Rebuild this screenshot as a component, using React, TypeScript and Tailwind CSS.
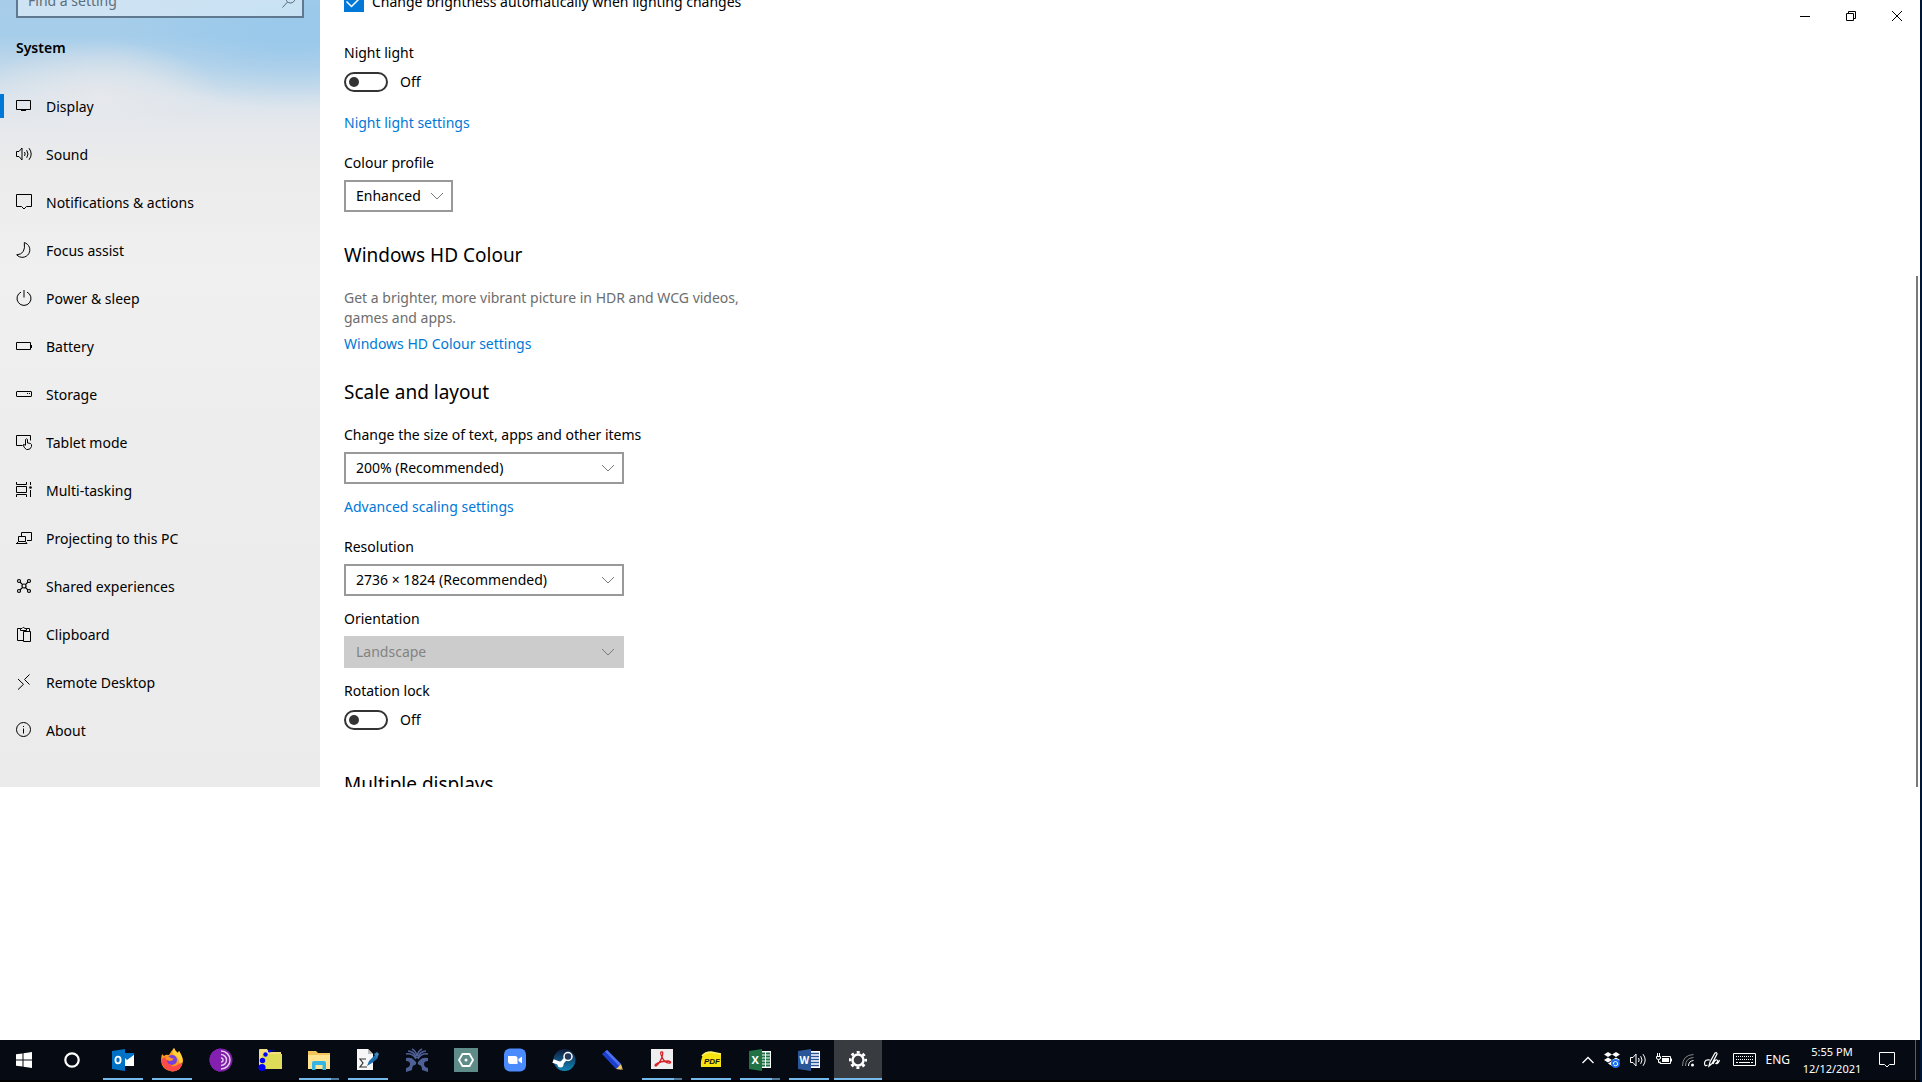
import type { ReactNode } from "react";

const chevron = (
  <svg className="pointer-events-none absolute right-[10px] top-[12px]" width="12" height="8" viewBox="0 0 12 8" fill="none" stroke="#7a7a7a">
    <path d="M0 1 L6 7 L12 1" />
  </svg>
);

const stroke = { fill: "none", stroke: "#000", strokeWidth: 1 };

const navItems: { label: string; icon: ReactNode }[] = [
  {
    label: "Display",
    icon: (
      <g {...stroke}>
        <path d="M0.5 2.5h14v9h-14z M7.5 12v1 M5 12.5h5" />
      </g>
    ),
  },
  {
    label: "Sound",
    icon: (
      <g {...stroke}>
        <path d="M0.5 5.5h2.5l3-3.5v12l-3-3.5h-2.5z" />
        <path d="M8.500 6q1.300 2 0 4 M10.700 4.200q2.600 3.800 0 7.600 M13 2.200q4.400 5.800 0 11.600" />
      </g>
    ),
  },
  {
    label: "Notifications & actions",
    icon: (
      <g {...stroke}>
        <path d="M0.5 0.5h15v12h-5l-2.5 2.5l-2.5-2.5h-5z" />
      </g>
    ),
  },
  {
    label: "Focus assist",
    icon: (
      <g {...stroke}>
        <path d="M8.3 0.6a7.5 7.5 0 1 1-7.6 12.2q9.3-0.5 7.6-12.2z" />
      </g>
    ),
  },
  {
    label: "Power & sleep",
    icon: (
      <g {...stroke}>
        <path d="M5 2.1a7 7 0 1 0 6 0" />
        <path d="M8 0v7.5" stroke="#555" strokeWidth="1.5" />
      </g>
    ),
  },
  {
    label: "Battery",
    icon: (
      <g {...stroke}>
        <path d="M0.5 4.5h14v7h-14z" />
        <path d="M15.5 7v3" />
      </g>
    ),
  },
  {
    label: "Storage",
    icon: (
      <g {...stroke}>
        <rect x="0.5" y="5.5" width="15" height="5" rx="0.5" />
        <path d="M11 7.5h1 M13 7.5h1" />
      </g>
    ),
  },
  {
    label: "Tablet mode",
    icon: (
      <g {...stroke}>
        <path d="M6.5 11.5h-6v-10h14v5" />
        <path d="M9.500 11v-5.500q1-1.500 2 0v3.500q3.500 0 4 1.500v2q-1 3-3.500 3h-1.500q-2-1-3.500-4.500q0.500-1.500 2.500 0.500" />
      </g>
    ),
  },
  {
    label: "Multi-tasking",
    icon: (
      <g {...stroke}>
        <path d="M0.5 4.5h10v6h-10z M0.5 0v2.5h10v-2.5 M0.5 15v-2.5h10v2.5 M14.5 0v3 M14.5 8v7" />
        <circle cx="14.5" cy="5.5" r="1.3" fill="#000" stroke="none" />
      </g>
    ),
  },
  {
    label: "Projecting to this PC",
    icon: (
      <g {...stroke}>
        <path d="M5.5 6v-3.5h10v8h-4.5 M2.5 6.500h7v5h-7z M0 13.500h11 M0.500 13.500l2-2 M11 13.500l-1.500-2" />
      </g>
    ),
  },
  {
    label: "Shared experiences",
    icon: (
      <g {...stroke} strokeWidth="1.2">
        <circle cx="3" cy="3" r="1.5" />
        <circle cx="13" cy="3" r="1.5" />
        <circle cx="3" cy="13" r="1.5" />
        <circle cx="13" cy="13" r="1.5" />
        <circle cx="8" cy="8" r="2" />
        <path d="M4 4l2.6 2.6 M12 4l-2.6 2.6 M4 12l2.6-2.6 M12 12l-2.6-2.6" />
      </g>
    ),
  },
  {
    label: "Clipboard",
    icon: (
      <g {...stroke}>
        <path d="M7 14.5h-5.5v-12h3 M10.5 2.5h3v3" />
        <path d="M4.5 4.5v-2h1.500q1-2.500 3 0h1.500v2z" />
        <path d="M7.5 5.500h7v10h-7z" />
      </g>
    ),
  },
  {
    label: "Remote Desktop",
    icon: (
      <g {...stroke}>
        <path d="M2 5l5.500 5.300l-5.500 5.300 M13.500 0.500l-5 5l5 5" />
      </g>
    ),
  },
  {
    label: "About",
    icon: (
      <g {...stroke}>
        <circle cx="7.5" cy="7.5" r="7" />
        <path d="M7.5 6.5v5 M7.5 4v1" />
      </g>
    ),
  },
];

type TaskApp = { name: string; icon: ReactNode; running?: boolean; stacked?: boolean };

const apps: TaskApp[] = [
  {
    name: "Outlook",
    running: true,
    icon: (
      <>
        <path d="M12 7h11v11h-11z" fill="#fff" />
        <path d="M12 5h11v2l-7 6l-4-3z" fill="#0072c6" />
        <path d="M13 9l3 3l7-5v2l-7 5l-3-2z" fill="#fff" />
        <path d="M1 3l13-2v22l-13-2z" fill="#0072c6" />
        <ellipse cx="7" cy="12" rx="2.6" ry="3.3" fill="none" stroke="#fff" strokeWidth="1.8" />
      </>
    ),
  },
  {
    name: "Firefox",
    running: true,
    icon: (
      <>
        <path d="M2 6l2 2q2-2 5-1q3-5 5-7q1 3 4 5l1-2q4 6 4 10q-1 10-11 10.500q-10-1-11-10.500q0-4 1-7z" fill="#ff9a1f" />
        <path d="M1 12q2-3 5-3q-1 2 2 4q2 6 7 5q4-1 6-6q2 2 1 5q-3 6-10 6.500q-9-1-11-11.500z" fill="#ff4a4a" />
        <path d="M14 0q1 3 4 5l1-2q4 6 3.500 11l-3 2q0-7-7-10q0-4 1.500-6z" fill="#ffd23a" />
        <circle cx="12" cy="12" r="5" fill="#7540dc" />
        <path d="M5 9q3-2 6 1q2 1 3 0q-1 3-4 3q-3 0-5-4z" fill="#ff9426" />
      </>
    ),
  },
  {
    name: "Tor Browser",
    icon: (
      <>
        <circle cx="12" cy="12" r="11.500" fill="#7a1fa2" />
        <path d="M12 0.500a11.500 11.500 0 0 0 0 23z" fill="#8420b0" />
        <g fill="none" stroke="#e6c8f0" strokeWidth="1.5">
          <path d="M12 3a9 9 0 0 1 0 18" />
          <path d="M12 6.500a5.500 5.500 0 0 1 0 11" />
          <path d="M12 10a2 2 0 0 1 0 4" />
        </g>
      </>
    ),
  },
  {
    name: "Folder backup",
    icon: (
      <>
        <path d="M1 5v-3q0-1 1-1h7l2 3h12v17h-22z" fill="#f4df80" />
        <path d="M4 6h20v15h-20z" fill="#dfdc5a" />
        <g fill="#0000f5">
          <circle cx="4" cy="19.5" r="3.6" />
          <circle cx="4.5" cy="12.500" r="2.700" />
          <circle cx="7.500" cy="6.500" r="2.200" />
          <circle cx="11.500" cy="3" r="1.500" />
          <circle cx="15.500" cy="2.500" r="1" />
        </g>
      </>
    ),
  },
  {
    name: "File Explorer",
    running: true,
    stacked: true,
    icon: (
      <>
        <path d="M1 3h8l2 2h12v16h-22z" fill="#f2c55a" />
        <path d="M1 7h22v14h-22z" fill="#ffe391" />
        <path d="M5 22v-7q0-2 2-2h10q2 0 2 2v7h-3.500v-5h-7v5z" fill="#35b5e5" />
      </>
    ),
  },
  {
    name: "TeXstudio",
    running: true,
    icon: (
      <>
        <path d="M1 1h11l5 5v16h-16z" fill="#f7f7f7" />
        <path d="M12 1v5h5z" fill="#bbb" />
        <path d="M10 11h-6l3 4l-3 4h7" fill="none" stroke="#333" strokeWidth="1.200" />
        <path d="M11 18l2-5l6-6l3 3l-6 5z" fill="#1a6eb0" />
        <path d="M18 6l3-2l2 2l-2 4z" fill="#3f87bd" />
      </>
    ),
  },
  {
    name: "Bible study",
    icon: (
      <>
        <path d="M1 10q6-1 8 2q4 3 1 5q-3 0-3 5l-6 2v-4q4-1 4-4q0-3-4-3z M23 10q-6-1-8 2q-4 3-1 5q3 0 3 5l6 2v-4q-4-1-4-4q0-3 4-3z" fill="#4f6097" />
        <path d="M1 6q7-1 10 5 M3 3q6 0 8.500 7 M7 1q4 2 5 7 M23 6q-7-1-10 5 M21 3q-6 0-8.500 7 M17 1q-4 2-5 7" fill="none" stroke="#4f6097" strokeWidth="1.500" />
      </>
    ),
  },
  {
    name: "Settings tool",
    icon: (
      <>
        <path d="M0 0h24v24h-24z" fill="#5d8c89" />
        <path d="M8.500 6h7l3.500 6l-3.500 6h-7l-3.500-6z" fill="none" stroke="#fff" strokeWidth="1.800" />
        <circle cx="12" cy="12" r="1.500" fill="#fff" />
      </>
    ),
  },
  {
    name: "Zoom",
    icon: (
      <>
        <rect x="1" y="0.500" width="22" height="23" rx="6" fill="#4a8cff" />
        <path d="M5 8h7q2.500 0 2.500 2.500v5.500h-7q-2.500 0-2.500-2.500z M15.500 11l3.500-2.500v7l-3.500-2.500z" fill="#fff" />
      </>
    ),
  },
  {
    name: "Steam",
    icon: (
      <>
        <defs>
          <linearGradient id="steam" x1="0" y1="0" x2="0" y2="1">
            <stop offset="0" stopColor="#101a3d" />
            <stop offset="1" stopColor="#1387b8" />
          </linearGradient>
        </defs>
        <circle cx="12.500" cy="12" r="11" fill="url(#steam)" />
        <path d="M1 13l8 3l6-7" fill="none" stroke="#fff" strokeWidth="3.500" />
        <circle cx="16" cy="8.500" r="4" fill="#24385d" stroke="#fff" strokeWidth="1.500" />
        <circle cx="8.500" cy="16.500" r="3" fill="#fff" />
      </>
    ),
  },
  {
    name: "Journal",
    icon: (
      <>
        <path d="M1 6l5-4l14 14l-5 5z" fill="#1d3fd0" />
        <path d="M4 3.500l2-1.500l14 14l-2 2z" fill="#4e72ee" />
        <path d="M15 21l5-5l2 6z" fill="#e8c66f" />
        <path d="M19.500 21.500l2-1.500l0.500 2z" fill="#553" />
      </>
    ),
  },
  {
    name: "Acrobat Reader",
    running: true,
    stacked: true,
    icon: (
      <>
        <path d="M1 1h22v20h-22z" fill="#eee" />
        <path d="M11 4q3-1 1 5q-2 6-6 9q-2 0 0-2q5-3 12-3q4 1 2 2q-5 1-8-6q-2-4-1-5z" fill="none" stroke="#d61f26" strokeWidth="1.300" />
      </>
    ),
  },
  {
    name: "PDF editor",
    running: true,
    icon: (
      <>
        <path d="M2 19q-1-14 8-15l12 2v13z" fill="#f8e312" />
        <path d="M3 8q3-4 9-4l10 2" fill="none" stroke="#fff36b" strokeWidth="1.500" />
        <text x="5" y="16" fontFamily="Liberation Sans, sans-serif" fontSize="8" fontWeight="bold" fontStyle="italic" fill="#111">PDF</text>
      </>
    ),
  },
  {
    name: "Excel",
    running: true,
    stacked: true,
    icon: (
      <>
        <path d="M13 3h10v17h-10z" fill="#fff" />
        <path d="M14 5.500h3m1 0h4m-8 3h3m1 0h4m-8 3h3m1 0h4m-8 3h3m1 0h4m-8 3h3m1 0h4" stroke="#217346" strokeWidth="1.800" />
        <path d="M1 3l13-2v22l-13-2z" fill="#217346" />
        <text x="3.500" y="16" fontFamily="Open Sans, sans-serif" fontSize="11" fontWeight="bold" fill="#fff">X</text>
      </>
    ),
  },
  {
    name: "Word",
    running: true,
    icon: (
      <>
        <path d="M13 3h10v17h-10z" fill="#fff" />
        <path d="M14 5.500h8m-8 3h8m-8 3h8m-8 3h8m-8 3h8" stroke="#2b579a" strokeWidth="1.300" />
        <path d="M1 3l13-2v22l-13-2z" fill="#2b579a" />
        <text x="2.500" y="16" fontFamily="Open Sans, sans-serif" fontSize="10" fontWeight="bold" fill="#fff">W</text>
      </>
    ),
  },
];

const trayIcons: { name: string; width: number; icon: ReactNode }[] = [
  { name: "Show hidden icons", width: 12, icon: <path d="M0.500 11l5.500-5.500l5.500 5.500" strokeWidth="1.300" /> },
  {
    name: "Dropbox",
    width: 16,
    icon: (
      <>
        <path d="M4 0l4 2.500l-4 2.500l-4-2.500z M12 0l4 2.500l-4 2.500l-4-2.500z M4 5.500l4 2.500l-4 2.500l-4-2.500z M12 5.500l4 2.500l-4 2.500l-4-2.500z M8 9l4 2.500l-4 2.500l-4-2.500z" fill="#fff" stroke="none" />
        <circle cx="11.500" cy="11.500" r="4.500" fill="#1d6ff2" stroke="none" />
        <path d="M9.500 12v-1.500q2-2 4 0 M13.500 11v2q-2 1.500-4 0" />
      </>
    ),
  },
  {
    name: "Volume",
    width: 16,
    icon: (
      <path d="M0.500 5.500h2.500l3-3.500v12l-3-3.500h-2.500z M8.500 6q1.300 2 0 4 M10.700 4.200q2.600 3.800 0 7.600 M13 2.200q4.400 5.800 0 11.600" />
    ),
  },
  {
    name: "Battery charging",
    width: 16,
    icon: (
      <>
        <path d="M6 4.500h8.500v7h-10.500v-2 M15.500 6.500v3 M1.500 1v3 M3.500 1v3 M0.500 4.500h4v1.500q0 1.500-2 1.500t-2-1.500z M2.500 7.500v3h2" />
        <path d="M6 6h7v4h-7z" fill="#fff" stroke="none" />
      </>
    ),
  },
  {
    name: "Wi-Fi",
    width: 12,
    icon: (
      <>
        <path d="M0.500 14q0-11 11-11.500 M3.500 14q0-8 8-8.500" stroke="#888" />
        <path d="M6.500 14q0-5 5-5.500" />
        <circle cx="10.500" cy="13" r="1.500" fill="#fff" stroke="none" />
      </>
    ),
  },
  {
    name: "Pen workspace",
    width: 16,
    icon: (
      <path d="M5 14l1-4l5-9q2-1 2 1l-5 9.500z M6 8q-5-1-5.500 3q0 4 3 2 M9 12q2-5 4-4t-1 3.500q2 1 3.500-3.500" strokeWidth="1.200" />
    ),
  },
];

function Toggle({ id, label }: { id: string; label: string }) {
  return (
    <div>
      <label htmlFor={id} className="block">{label}</label>
      <div className="mt-[9px] flex items-center gap-3">
        <input
          id={id}
          type="checkbox"
          role="switch"
          className="flex h-5 w-11 appearance-none items-center rounded-full border-2 border-[#333] pl-[3px] before:size-[10px] before:rounded-full before:bg-[#333] checked:before:ml-[23px]"
        />
        <span>Off</span>
      </div>
    </div>
  );
}

function Dropdown({ id, label, value, narrow, disabled }: { id: string; label: string; value: string; narrow?: boolean; disabled?: boolean }) {
  return (
    <div>
      <label htmlFor={id} className="block">{label}</label>
      <div className={narrow ? "relative mt-[7px] w-[109px]" : "relative mt-[7px] w-[280px]"}>
        <select
          id={id}
          disabled={disabled}
          className="block h-8 w-full appearance-none border-2 border-[#999] bg-white pl-[10px] disabled:border-[#ccc] disabled:bg-[#ccc] disabled:text-[#838383] disabled:opacity-100"
        >
          <option>{value}</option>
        </select>
        {chevron}
      </div>
    </div>
  );
}

function Sidebar() {
  return (
    <aside className="w-80 shrink-0 bg-[radial-gradient(ellipse_120px_60px_at_100px_100px,#e6e8ec_0%,#e6e8ec00_100%),radial-gradient(ellipse_180px_80px_at_290px_30px,#98c8eb_0%,#98c8eb00_100%),linear-gradient(180deg,#a6cce9_0px,#a6ceea_36px,#b7d4ea_55px,#cbddea_78px,#dbe4ec_98px,#e5e8ec_125px,#ebebeb_165px,#f0f0f0_270px,#ededed_450px,#ebebeb_100%)]">
      <div className="relative mx-4 -mt-[18px]">
        <input
          type="text"
          aria-label="Find a setting"
          placeholder="Find a setting"
          className="block h-9 w-full border-2 border-[#5f7a90] bg-white/45 pl-[10px] placeholder:text-[#5d6d7b]"
        />
        <svg className="absolute right-2 top-[10px]" width="14" height="16" viewBox="0 0 14 16" fill="none" stroke="#52687a">
          <circle cx="8.500" cy="6.500" r="4.500" />
          <path d="M5.500 10l-5 5.500" />
        </svg>
      </div>
      <h2 className="mx-4 mt-5 font-semibold">System</h2>
      <nav className="mt-6">
        {navItems.map((item, i) => (
          <a key={item.label} href="#" className="flex h-12 items-center">
            <span className={i === 0 ? "mr-3 h-6 w-1 bg-[#0078d7]" : "mr-3 h-6 w-1"} />
            <svg width="16" height="16" viewBox="0 0 16 16" className="shrink-0 overflow-visible">{item.icon}</svg>
            <span className="pl-[14px] pt-[2px]">{item.label}</span>
          </a>
        ))}
      </nav>
    </aside>
  );
}

function DisplaySettings() {
  return (
    <main className="-mt-2 w-[440px] pl-6">
      <label className="flex gap-2">
        <span className="grid size-5 shrink-0 place-items-center">
          <input type="checkbox" defaultChecked className="col-start-1 row-start-1 size-5 appearance-none bg-[#0078d7]" />
          <svg className="pointer-events-none col-start-1 row-start-1" width="20" height="20" viewBox="0 0 20 20" fill="none" stroke="#fff" strokeWidth="1.5">
            <path d="M2.500 9.500l5 5l10-10" />
          </svg>
        </span>
        <span className="whitespace-nowrap">Change brightness automatically when lighting changes</span>
      </label>
      <div className="mt-[31px]">
        <Toggle id="night-light" label="Night light" />
      </div>
      <a href="#" className="mt-[21px] block text-[#0078d7]">Night light settings</a>
      <div className="mt-5">
        <Dropdown id="profile" label="Colour profile" value="Enhanced" narrow />
      </div>

      <h2 className="mt-[29px] text-[19px] leading-7">Windows HD Colour</h2>
      <p className="mt-[19px] text-[#6d6d6d]">
        Get a brighter, more vibrant picture in HDR and WCG videos, games and apps.
      </p>
      <a href="#" className="mt-[6px] block text-[#0078d7]">Windows HD Colour settings</a>

      <h2 className="mt-6 text-[19px] leading-7">Scale and layout</h2>
      <div className="mt-[19px]">
        <Dropdown id="scale" label="Change the size of text, apps and other items" value="200% (Recommended)" />
      </div>
      <a href="#" className="mt-[13px] block text-[#0078d7]">Advanced scaling settings</a>
      <div className="mt-5">
        <Dropdown id="resolution" label="Resolution" value="2736 × 1824 (Recommended)" />
      </div>
      <div className="mt-[13px]">
        <Dropdown id="orientation" label="Orientation" value="Landscape" disabled />
      </div>
      <div className="mt-[13px]">
        <Toggle id="rotation-lock" label="Rotation lock" />
      </div>

      <h2 className="mt-10 text-[19px] leading-7">Multiple displays</h2>
    </main>
  );
}

function Taskbar() {
  return (
    <footer className="flex h-[42px] shrink-0 items-stretch border-b-2 border-black bg-[#060a12] text-white">
      <button aria-label="Start" className="flex w-12 items-center justify-center">
        <svg width="16" height="16" viewBox="0 0 16 16" fill="#fff">
          <path d="M0 2.300l6.500-0.900v6.100h-6.500z M7.500 1.200l8.500-1.200v7.500h-8.500z M0 8.500h6.500v6.100l-6.500-0.900z M7.500 8.500h8.500v7.500l-8.500-1.200z" />
        </svg>
      </button>
      <button aria-label="Cortana" className="mr-[3px] flex w-12 items-center justify-center">
        <svg width="16" height="16" viewBox="0 0 16 16">
          <circle cx="8" cy="8" r="6.700" fill="none" stroke="#fff" strokeWidth="2.200" />
        </svg>
      </button>
      <div className="flex gap-px">
        {apps.map((app) => (
          <button key={app.name} aria-label={app.name} className="flex w-12 flex-col items-center pt-2">
            <svg width="24" height="24" viewBox="0 0 24 24">{app.icon}</svg>
            {app.running && (
              <span className="mt-auto flex h-[2px] w-10 bg-[#76b9ed]">
                {app.stacked && <span className="ml-auto w-2 bg-[#51799c]" />}
              </span>
            )}
          </button>
        ))}
        <button aria-label="Settings" className="flex w-12 flex-col items-center bg-[#383b40] pt-[10px]">
          <svg width="20" height="20" viewBox="0 0 20 20" fill="none" stroke="#fff">
            <circle cx="10" cy="10" r="5.500" strokeWidth="2.400" />
            <circle cx="10" cy="10" r="7.700" strokeWidth="2.600" strokeDasharray="3 3.047" strokeDashoffset="1.500" />
          </svg>
          <span className="mt-auto h-[2px] w-full bg-[#76b9ed]" />
        </button>
      </div>

      <div className="ml-auto flex items-center gap-2">
        {trayIcons.map((item) => (
          <button key={item.name} aria-label={item.name} className="px-px">
            <svg width={item.width} height="16" viewBox={`0 0 ${item.width} 16`} fill="none" stroke="#fff" className="block overflow-visible">
              {item.icon}
            </svg>
          </button>
        ))}
        <button aria-label="Touch keyboard" className="ml-1">
          <svg width="24" height="14" viewBox="0 0 24 14" fill="none" stroke="#fff" className="block">
            <path d="M0.500 0.500h22v12h-22z" />
            <path d="M3 3.500h18 M3 6.500h18" strokeDasharray="1 1" />
            <path d="M3 9.500h2 M6 9.500h11 M18 9.500h2" />
          </svg>
        </button>
        <button className="text-xs">ENG</button>
      </div>
      <button className="ml-3 w-[60px] text-center text-[11px] leading-[17px]">
        <span className="block">5:55 PM</span>
        <span className="block">12/12/2021</span>
      </button>
      <button aria-label="Action centre" className="ml-[17px] mr-5 flex items-center">
        <svg width="16" height="16" viewBox="0 0 16 16" fill="none" stroke="#fff">
          <path d="M0.500 0.500h15v12h-5l-2.500 2.500l-2.500-2.500h-5z" />
        </svg>
      </button>
      <span className="mr-1 w-px bg-[#5c6066]" />
    </footer>
  );
}

export default function App() {
  return (
    <div className="flex h-screen flex-col overflow-hidden border-r-2 border-[#001434] bg-white font-['Noto_Sans','Open_Sans',sans-serif] text-sm text-black">
      <div className="flex min-h-0 flex-1 overflow-hidden">
        <Sidebar />
        <DisplaySettings />
        <div className="ml-auto flex flex-col items-end">
          <div className="flex">
            <button aria-label="Minimise" className="flex h-8 w-[46px] items-center justify-center">
              <svg width="10" height="10" viewBox="0 0 10 10" stroke="#000"><path d="M0 5.500h10" /></svg>
            </button>
            <button aria-label="Restore" className="flex h-8 w-[46px] items-center justify-center">
              <svg width="10" height="10" viewBox="0 0 10 10" fill="none" stroke="#000">
                <path d="M0.500 2.500h7v7h-7z M2.500 2.500v-2h7v7h-2" />
              </svg>
            </button>
            <button aria-label="Close" className="flex h-8 w-[46px] items-center justify-center">
              <svg width="10" height="10" viewBox="0 0 10 10" stroke="#000"><path d="M0 0l10 10 M10 0l-10 10" /></svg>
            </button>
          </div>
          <div className="mr-[2px] mt-[244px] w-[2px] flex-1 bg-[#7a7a7a]" />
        </div>
      </div>
      <div className="h-[253px] shrink-0" />
      <Taskbar />
    </div>
  );
}
